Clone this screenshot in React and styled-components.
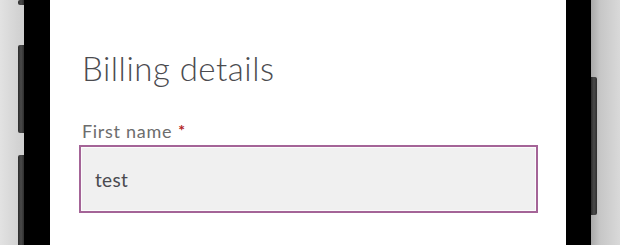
import React from "react";
import styled, { createGlobalStyle } from "styled-components";

const Global = createGlobalStyle`
  html, body { margin: 0; padding: 0; }
  body { width: 620px; height: 245px; overflow: hidden; background: #d6d6d6; }
  * { box-sizing: border-box; }
`;

const Page = styled.div`
  display: flex;
  width: 620px;
  height: 245px;
  overflow: hidden;
`;

const Side = styled.div`
  width: ${(p) => p.$w}px;
  flex: none;
  display: flex;
  flex-direction: column;
  align-items: ${(p) => (p.$left ? "flex-end" : "flex-start")};
  background: ${(p) =>
    p.$left
      ? "linear-gradient(90deg, #e2e2e2 0%, #d4d4d4 70%, #cfcfcf 100%)"
      : "linear-gradient(90deg, #a9a9a9 0%, #c6c6c6 30%, #d9d9d9 100%)"};
`;

const SideButton = styled.div`
  width: 6px;
  flex: none;
  height: ${(p) => p.$h}px;
  margin-top: ${(p) => p.$top}px;
  background: linear-gradient(90deg, #2b2b2b, #4a4a4a 50%, #2e2e2e);
  border-radius: ${(p) => (p.$left ? "2px 0 0 2px" : "0 2px 2px 0")};
`;

const Phone = styled.div`
  flex: 1;
  display: flex;
  border-left: 26px solid #000;
  border-right: 25px solid #000;
  box-shadow: inset 1px 0 0 #222;
`;

const Screen = styled.main`
  flex: 1;
  background: #fff;
  padding: 46px 27px 0 29px;
  font-family: "Lato", "Open Sans", sans-serif;
`;

const Heading = styled.h2`
  margin: 0 0 30px 3px;
  font-weight: 300;
  font-size: 33px;
  line-height: 44px;
  color: #4b4b4f;
  letter-spacing: 0.5px;
`;

const Label = styled.label`
  display: block;
  margin: 0 0 2px 3px;
  font-size: 18px;
  line-height: 22px;
  letter-spacing: 0.7px;
  color: #6d6d6d;
`;

const Req = styled.abbr`
  color: #b22222;
  text-decoration: none;
  margin-left: 6px;
  font-weight: 700;
  font-size: 16px;
  position: relative;
  top: -2px;
`;

const Input = styled.input`
  display: block;
  width: 459px;
  height: 68px;
  margin: 0;
  padding: 0 14px;
  background: #f0f0f0;
  border: 2px solid #a46497;
  box-shadow: inset 0 0 0 1px rgba(255, 255, 255, 0.7);
  font-family: "Lato", "Open Sans", sans-serif;
  font-size: 19px;
  letter-spacing: 0.3px;
  color: #4a4a4f;
  outline: none;
`;

export default function App() {
  return (
    <>
      <Global />
      <Page>
        <Side $w={24} $left>
          <SideButton $left $top={0} $h={5} />
          <SideButton $left $top={40} $h={88} />
          <SideButton $left $top={22} $h={100} />
        </Side>
        <Phone>
          <Screen>
            <Heading>Billing details</Heading>
            <Label htmlFor="fn">
              First name<Req title="required">*</Req>
            </Label>
            <Input id="fn" defaultValue="test" />
          </Screen>
        </Phone>
        <Side $w={29}>
          <SideButton $top={77} $h={138} />
        </Side>
      </Page>
    </>
  );
}
